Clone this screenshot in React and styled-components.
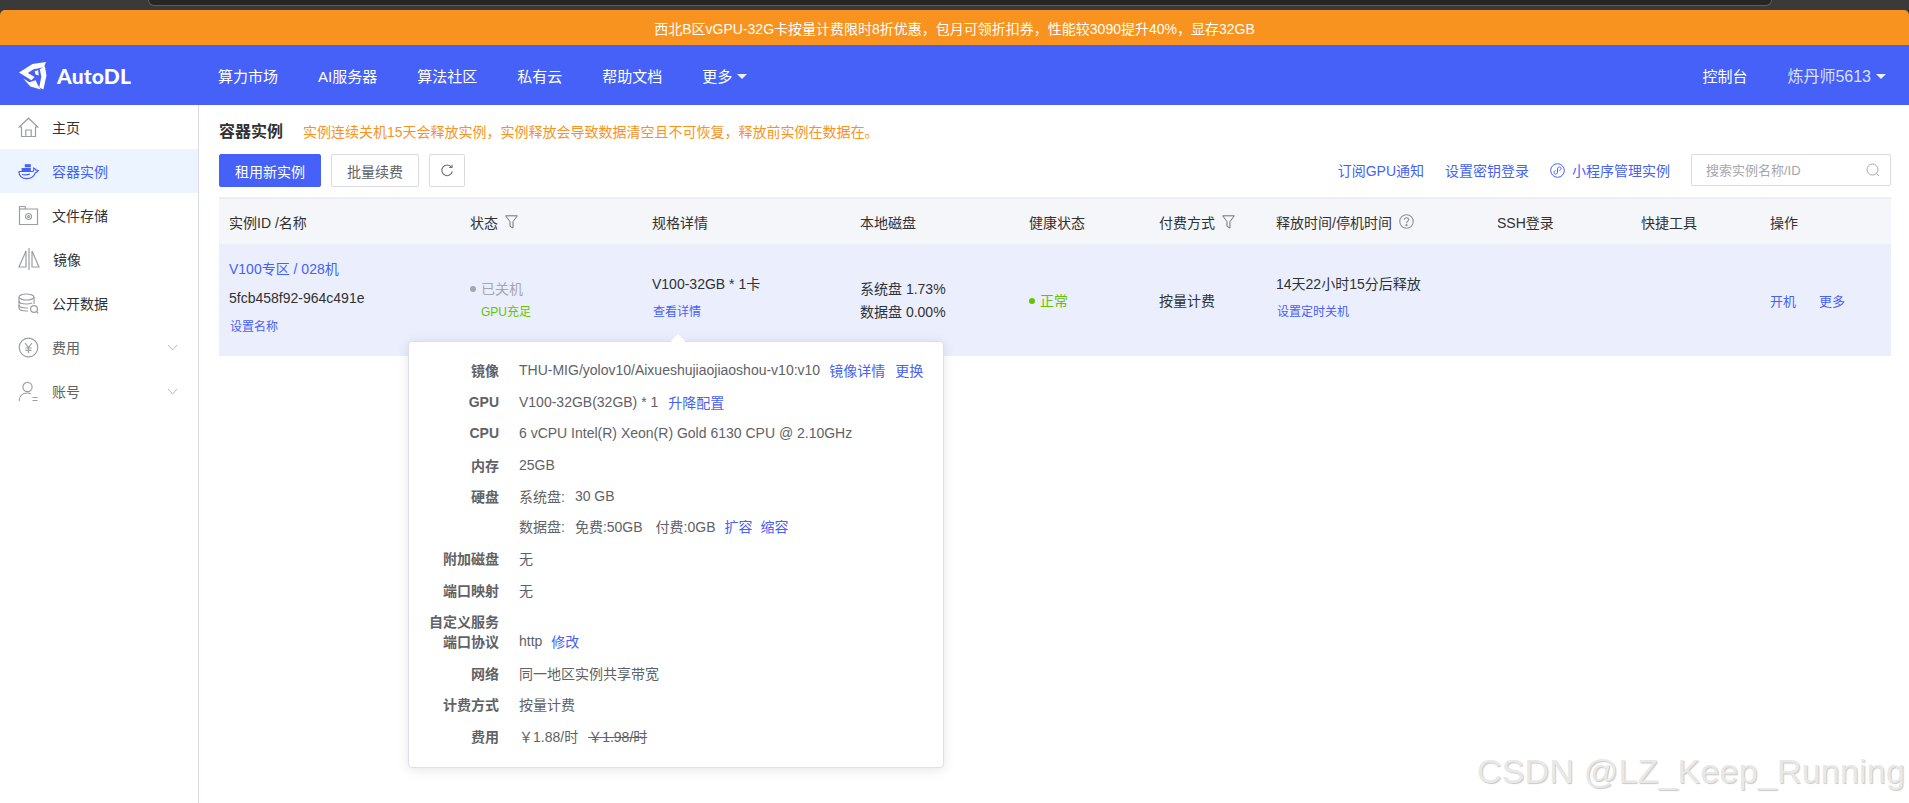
import React from 'react';
import styled, { createGlobalStyle } from 'styled-components';

const blue = '#4661f7';
const green = '#67c200';
const grey = '#a5a7ab';
const iconGrey = '#9b9ea4';

const GlobalStyle = createGlobalStyle`
  html, body {
    margin: 0;
    padding: 0;
    background: #fff;
  }
  body {
    font-family: "Liberation Sans", "Noto Sans CJK SC", sans-serif;
    font-size: 14px;
    color: #303133;
  }
  * {
    box-sizing: border-box;
  }
`;

const Page = styled.div`
  position: relative;
  width: 1909px;
  height: 803px;
  overflow: hidden;
  display: flex;
  flex-direction: column;
`;

const Chrome = styled.div`
  height: 10px;
  background: #3a3a3a;
`;

const ChromeTab = styled.div`
  height: 6px;
  margin: 0 137px 0 148px;
  background: #262626;
  border: 1px solid #5c5c5c;
  border-top: 0;
  border-radius: 0 0 6px 6px;
`;

const ChromeBack = styled.div`
  background: #3a3a3a;
`;

const Banner = styled.div`
  height: 35px;
  background: #f7931e;
  border-radius: 5px 5px 0 0;
  color: #fff;
  display: flex;
  align-items: center;
  justify-content: center;
  font-size: 14px;
`;

const Nav = styled.header`
  height: 60px;
  background: ${blue};
  display: flex;
  align-items: center;
  padding: 0 23px 0 18px;
  color: #fff;
`;

const Logo = styled.div`
  display: flex;
  align-items: center;
  gap: 10px;
  width: 200px;
  font-family: Lato, sans-serif;
  font-size: 21px;
  font-weight: 900;
  letter-spacing: 0.2px;
`;

const NavLinks = styled.nav`
  display: flex;
  align-items: center;
  gap: 40px;
  flex: 1;
  font-size: 15px;
`;

const NavRight = styled.div`
  display: flex;
  align-items: center;
  gap: 40px;
  font-size: 15px;
`;

const NavItem = styled.span`
  display: inline-flex;
  align-items: center;
  gap: 5px;
  font-size: ${props => (props.$dim ? 16 : 15)}px;
  color: ${props => (props.$dim ? 'rgba(255,255,255,0.82)' : '#fff')};
`;

const Caret = styled.i`
  display: inline-block;
  width: 0;
  height: 0;
  margin-top: 2px;
  border-left: 5px solid transparent;
  border-right: 5px solid transparent;
  border-top: 5px solid rgba(255, 255, 255, 0.9);
`;

const Body = styled.div`
  flex: 1;
  display: flex;
  min-height: 0;
`;

const Sidebar = styled.aside`
  width: 199px;
  flex: none;
  border-right: 1px solid #d8dbe6;
`;

const MenuItem = styled.div`
  height: 44px;
  display: flex;
  align-items: center;
  padding: 0 0 0 18px;
  gap: 13px;
  background: ${props => (props.$active ? '#ecf4ff' : 'transparent')};
  color: ${props => (props.$active ? blue : props.$muted ? '#5f6266' : '#303133')};
  svg {
    flex: none;
  }
`;

const MenuLabel = styled.span`
  width: 102px;
`;

const Main = styled.main`
  flex: 1;
  padding: 0 18px 0 20px;
  min-width: 0;
`;

const TitleRow = styled.div`
  height: 49px;
  display: flex;
  align-items: center;
  gap: 20px;
`;

const Title = styled.h1`
  margin: 0;
  font-size: 16px;
  font-weight: 700;
  color: #303133;
`;

const Hint = styled.span`
  margin-top: 3px;
  font-size: 14px;
  color: #f7931e;
`;

const Toolbar = styled.div`
  height: 33px;
  display: flex;
  align-items: center;
  gap: 10px;
`;

const Button = styled.button`
  height: 33px;
  width: ${props => props.$w}px;
  padding: 0;
  border: 1px solid ${props => (props.$primary ? blue : '#d8dbe6')};
  border-radius: 2px;
  background: ${props => (props.$primary ? blue : '#fff')};
  color: ${props => (props.$primary ? '#fff' : '#5f6266')};
  font: inherit;
  font-size: 14px;
  display: flex;
  align-items: center;
  justify-content: center;
`;

const ToolLinks = styled.div`
  margin-left: auto;
  display: flex;
  align-items: center;
  gap: 21px;
  margin-top: -1px;
  color: ${blue};
`;

const ToolLink = styled.span`
  display: inline-flex;
  align-items: center;
  gap: 7px;
`;

const SearchBox = styled.div`
  width: 200px;
  height: 32px;
  border: 1px solid #d8dbe6;
  border-radius: 2px;
  display: flex;
  align-items: center;
  padding: 0 10px 0 14px;
`;

const SearchInput = styled.input`
  flex: 1;
  min-width: 0;
  border: 0;
  outline: 0;
  padding: 0;
  font: inherit;
  font-size: 13px;
  &::placeholder {
    color: #a5a7ab;
    opacity: 1;
  }
`;

const Table = styled.div`
  position: relative;
  margin-top: 10px;
`;

const Cols = styled.div`
  display: grid;
  grid-template-columns: 241px 182px 208px 169px 130px 117px 221px 144px 129px 131px;
`;

const Head = styled(Cols)`
  height: 48px;
  background: #f5f6fa;
  border-top: 2px solid #eceef4;
  border-bottom: 1px solid #eceef4;
`;

const HeadCell = styled.div`
  padding-left: 10px;
  display: flex;
  align-items: center;
  gap: 7px;
  color: #303133;
`;

const Row = styled(Cols)`
  height: 111px;
  background: #ebeffd;
`;

const Cell = styled.div`
  padding: 0 0 ${props => props.$shift || 0}px 10px;
  display: flex;
  flex-direction: column;
  justify-content: center;
  align-items: flex-start;
  gap: ${props => props.$gap || 0}px;
`;

const Line = styled.div`
  height: 20px;
  line-height: 20px;
  white-space: nowrap;
  display: flex;
  align-items: center;
  color: ${props => props.$color || '#303133'};
  font-size: ${props => props.$size || 14}px;
`;

const SmallLink = styled(Line)`
  font-size: 12px;
  color: ${blue};
  margin-left: ${props => props.$indent || 0}px;
`;

const StatusNote = styled(Line)`
  font-size: 12px;
  color: ${green};
  margin-left: 11px;
`;

const Dot = styled.i`
  width: 6px;
  height: 6px;
  border-radius: 50%;
  margin-right: 5px;
  background: ${props => props.$color};
`;

const ActionLinks = styled.div`
  display: flex;
  gap: 23px;
  font-size: 13px;
  color: ${blue};
`;

const Popover = styled.div`
  position: absolute;
  top: 144px;
  left: 189px;
  width: 536px;
  height: 427px;
  padding-top: 18px;
  background: #fff;
  border: 1px solid #dcdfe8;
  border-radius: 4px;
  box-shadow: 0 2px 12px rgba(0, 0, 0, 0.1);
  color: #606266;
  &::before {
    content: '';
    position: absolute;
    top: -6px;
    left: 264px;
    width: 10px;
    height: 10px;
    background: #fff;
    transform: rotate(45deg);
  }
`;

const InfoRow = styled.div`
  height: 20px;
  margin-bottom: ${props => (props.$mb === undefined ? 11.6 : props.$mb)}px;
  display: flex;
  align-items: center;
  white-space: nowrap;
`;

const InfoLabel = styled.span`
  width: 90px;
  margin-right: 20px;
  text-align: right;
  font-weight: 700;
  color: #606266;
`;

const InfoValue = styled.span`
  font-size: 14px;
  margin-right: ${props => props.$mr || 0}px;
  text-decoration: ${props => (props.$strike ? 'line-through' : 'none')};
`;

const InfoLink = styled.span`
  color: ${blue};
  margin-right: ${props => props.$mr || 0}px;
`;

const Watermark = styled.div`
  position: absolute;
  right: 4px;
  bottom: 12px;
  font-family: "Liberation Sans", sans-serif;
  font-size: 34px;
  letter-spacing: 0.2px;
  color: #e8e8e8;
  text-shadow: 1px 1px 1px #c8c8c8;
`;

const LogoMark = () => (
  <svg width="29" height="29" viewBox="0 0 28 28" fill="#fff">
    <path d="M1 11 L14 3 L27 1 L25 6 L15 8 L9.5 11.5 L16 15.5 L13 18.5 Z" />
    <path d="M21 8 L26 5 L27.5 14 L24.5 27.5 L20.5 25.5 L22.5 15 Z" />
    <path d="M5 17 L11 20.5 L17 18.5 L19 23 L22 27.5 L12 24.5 Z" />
    <path d="M16 10 L19.5 9 L20 14 L17 13 Z" />
  </svg>
);

const stroke = { fill: 'none', stroke: 'currentColor', strokeWidth: 1.2 };

const HomeIcon = () => (
  <svg width="21" height="21" viewBox="0 0 21 21" color={iconGrey} {...stroke}>
    <path d="M1.2 10 L10.5 1.2 L19.8 10 H17.5 V19.5 H3.5 V10 Z" />
    <path d="M7.8 19.5 V13 H13.2 V19.5" />
  </svg>
);

const DockerIcon = () => (
  <svg width="21" height="21" viewBox="0 0 21 21" color={blue} {...stroke}>
    <path d="M1 10.5 H15 C15.8 9.5 16 8.4 15.6 7 C17 7.4 17.8 8.4 18 9.3 C18.8 9 19.6 9.2 20.3 9.6 C19.6 11.2 18.6 11.6 17.4 11.6 C16 15.6 12.8 17.6 8.6 17.6 C3.6 17.6 0.8 14.6 1 10.5 Z" />
    <path d="M4 13.5 C6.5 14 9.5 14 12 13" />
    <rect x="3.6" y="7" width="9.2" height="3.5" fill="currentColor" stroke="none" />
    <rect x="6.8" y="3.2" width="6" height="3.1" fill="currentColor" stroke="none" />
  </svg>
);

const FolderIcon = () => (
  <svg width="21" height="21" viewBox="0 0 21 21" color={iconGrey} {...stroke}>
    <path d="M1.5 19.5 V1.5 H7 L8 4 H19.5 V19.5 Z" />
    <path d="M1.5 4 H8" />
    <circle cx="10.5" cy="11.5" r="3" />
    <circle cx="10.5" cy="11.5" r="1" />
  </svg>
);

const MirrorIcon = () => (
  <svg width="22" height="24" viewBox="0 0 22 24" color={iconGrey} {...stroke}>
    <path d="M8 4 V20 H1 Z" />
    <path d="M14 4 V20 H21 Z" />
    <path d="M11 1 V23" />
  </svg>
);

const DatabaseIcon = () => (
  <svg width="21" height="21" viewBox="0 0 21 21" color={iconGrey} {...stroke}>
    <ellipse cx="8.5" cy="4" rx="7.5" ry="3" />
    <path d="M1 4 V15 C1 16.8 4.4 18 8.5 18 H10" />
    <path d="M16 4 V11" />
    <path d="M1 8 C1 9.8 4.4 11 8.5 11 C10.5 11 12.5 10.7 14 10" />
    <path d="M1 12 C1 13.8 4.4 15 8.5 15 H10" />
    <circle cx="16" cy="16" r="3.4" />
    <path d="M18.5 18.5 L20.3 20.3" />
  </svg>
);

const YenIcon = () => (
  <svg width="21" height="21" viewBox="0 0 21 21" color={iconGrey} {...stroke}>
    <circle cx="10.5" cy="10.5" r="9.3" />
    <path d="M7 6 L10.5 10.5 L14 6 M10.5 10.5 V16 M7.4 11 H13.6 M7.4 13.4 H13.6" />
  </svg>
);

const UserIcon = () => (
  <svg width="21" height="21" viewBox="0 0 21 21" color={iconGrey} {...stroke}>
    <circle cx="9.5" cy="6" r="4.6" />
    <path d="M1.2 20 C1.2 15 4.5 12 9.5 12 C10.8 12 12 12.2 13 12.7" />
    <path d="M14.5 16.5 H19.5 M14.5 19.5 H19.5" />
  </svg>
);

const Chevron = () => (
  <svg width="11" height="7" viewBox="0 0 11 7" color="#b4b7bd" fill="none" stroke="currentColor" strokeWidth="1">
    <path d="M1 1 L5.5 6 L10 1" />
  </svg>
);

const RefreshIcon = () => (
  <svg width="14" height="14" viewBox="0 0 14 14" color="#6b6e74" fill="none" stroke="currentColor" strokeWidth="1.1">
    <path d="M11.5 3.4 A5.3 5.3 0 1 0 12.3 7.4" />
    <path d="M9.2 3.5 H12 V0.8" />
  </svg>
);

const FunnelIcon = () => (
  <svg width="13" height="14" viewBox="0 0 13 14" color="#6f7277" fill="none" stroke="currentColor" strokeWidth="1">
    <path d="M0.7 0.8 H12.3 L8 6.6 V13 L5 11.4 V6.6 Z" />
  </svg>
);

const HelpIcon = () => (
  <svg width="15" height="15" viewBox="0 0 14 14" color="#8f9297" fill="none" stroke="currentColor" strokeWidth="1">
    <circle cx="7" cy="7" r="6.3" />
    <path d="M5 5.4 C5 2.9 9 2.9 9 5.3 C9 6.8 7 6.8 7 8.6" />
    <circle cx="7" cy="10.4" r="0.5" fill="currentColor" />
  </svg>
);

const MiniAppIcon = () => (
  <svg width="15" height="15" viewBox="0 0 15 15" color={blue} fill="none" stroke="currentColor" strokeWidth="1">
    <circle cx="7.5" cy="7.5" r="6.8" />
    <path d="M4 9.5 C4 12 7.5 11.5 7.5 9 V6 C7.5 3.5 11 3 11 5.5 C11 6.8 10 7.3 9.2 7.4" />
    <path d="M5.8 7.6 C5 7.7 4 8.3 4 9.5" />
  </svg>
);

const SearchIcon = () => (
  <svg width="14" height="14" viewBox="0 0 14 14" color="#a5a7ab" fill="none" stroke="currentColor" strokeWidth="1">
    <circle cx="6.5" cy="6.5" r="5.5" />
    <path d="M10.5 10.5 L13 13" />
  </svg>
);

const menu = [
  { label: '主页', icon: HomeIcon },
  { label: '容器实例', icon: DockerIcon, active: true },
  { label: '文件存储', icon: FolderIcon },
  { label: '镜像', icon: MirrorIcon },
  { label: '公开数据', icon: DatabaseIcon },
  { label: '费用', icon: YenIcon, muted: true, more: true },
  { label: '账号', icon: UserIcon, muted: true, more: true }
];

const headers = [
  { label: '实例ID /名称' },
  { label: '状态', icon: FunnelIcon },
  { label: '规格详情' },
  { label: '本地磁盘' },
  { label: '健康状态' },
  { label: '付费方式', icon: FunnelIcon },
  { label: '释放时间/停机时间', icon: HelpIcon },
  { label: 'SSH登录' },
  { label: '快捷工具' },
  { label: '操作' }
];

const App = () => {
  return (
    <Page>
      <GlobalStyle />
      <Chrome>
        <ChromeTab />
      </Chrome>
      <ChromeBack>
        <Banner>西北B区vGPU-32G卡按量计费限时8折优惠，包月可领折扣券，性能较3090提升40%，显存32GB</Banner>
      </ChromeBack>
      <Nav>
        <Logo>
          <LogoMark />
          AutoDL
        </Logo>
        <NavLinks>
          <NavItem>算力市场</NavItem>
          <NavItem>AI服务器</NavItem>
          <NavItem>算法社区</NavItem>
          <NavItem>私有云</NavItem>
          <NavItem>帮助文档</NavItem>
          <NavItem>更多<Caret /></NavItem>
        </NavLinks>
        <NavRight>
          <NavItem>控制台</NavItem>
          <NavItem $dim>炼丹师5613<Caret /></NavItem>
        </NavRight>
      </Nav>
      <Body>
        <Sidebar>
          {menu.map(item => {
            const Icon = item.icon;
            return (
              <MenuItem key={item.label} $active={item.active} $muted={item.muted}>
                <Icon />
                <MenuLabel>{item.label}</MenuLabel>
                {item.more && <Chevron />}
              </MenuItem>
            );
          })}
        </Sidebar>
        <Main>
          <TitleRow>
            <Title>容器实例</Title>
            <Hint>实例连续关机15天会释放实例，实例释放会导致数据清空且不可恢复，释放前实例在数据在。</Hint>
          </TitleRow>
          <Toolbar>
            <Button $primary $w={102}>租用新实例</Button>
            <Button $w={88}>批量续费</Button>
            <Button $w={36}><RefreshIcon /></Button>
            <ToolLinks>
              <ToolLink>订阅GPU通知</ToolLink>
              <ToolLink>设置密钥登录</ToolLink>
              <ToolLink><MiniAppIcon />小程序管理实例</ToolLink>
              <SearchBox>
                <SearchInput placeholder="搜索实例名称/ID" />
                <SearchIcon />
              </SearchBox>
            </ToolLinks>
          </Toolbar>
          <Table>
            <Head>
              {headers.map(h => {
                const Icon = h.icon;
                return (
                  <HeadCell key={h.label}>
                    {h.label}
                    {Icon && <Icon />}
                  </HeadCell>
                );
              })}
            </Head>
            <Row>
              <Cell $gap={9} $shift={5}>
                <Line $color={blue}>V100专区 / 028机</Line>
                <Line>5fcb458f92-964c491e</Line>
                <SmallLink $indent={1}>设置名称</SmallLink>
              </Cell>
              <Cell $gap={3}>
                <Line $color={grey}><Dot $color={grey} />已关机</Line>
                <StatusNote>GPU充足</StatusNote>
              </Cell>
              <Cell $gap={8} $shift={5}>
                <Line>V100-32GB * 1卡</Line>
                <SmallLink $indent={1}>查看详情</SmallLink>
              </Cell>
              <Cell $gap={3}>
                <Line>系统盘 1.73%</Line>
                <Line>数据盘 0.00%</Line>
              </Cell>
              <Cell>
                <Line $color={green}><Dot $color={green} />正常</Line>
              </Cell>
              <Cell>
                <Line>按量计费</Line>
              </Cell>
              <Cell $gap={8} $shift={5}>
                <Line>14天22小时15分后释放</Line>
                <SmallLink $indent={1}>设置定时关机</SmallLink>
              </Cell>
              <Cell />
              <Cell />
              <Cell>
                <ActionLinks>
                  <span>开机</span>
                  <span>更多</span>
                </ActionLinks>
              </Cell>
            </Row>
            <Popover>
              <InfoRow>
                <InfoLabel>镜像</InfoLabel>
                <InfoValue $mr={9}>THU-MIG/yolov10/Aixueshujiaojiaoshou-v10:v10</InfoValue>
                <InfoLink $mr={10}>镜像详情</InfoLink>
                <InfoLink>更换</InfoLink>
              </InfoRow>
              <InfoRow>
                <InfoLabel>GPU</InfoLabel>
                <InfoValue $mr={10}>V100-32GB(32GB) * 1</InfoValue>
                <InfoLink>升降配置</InfoLink>
              </InfoRow>
              <InfoRow>
                <InfoLabel>CPU</InfoLabel>
                <InfoValue>6 vCPU Intel(R) Xeon(R) Gold 6130 CPU @ 2.10GHz</InfoValue>
              </InfoRow>
              <InfoRow>
                <InfoLabel>内存</InfoLabel>
                <InfoValue>25GB</InfoValue>
              </InfoRow>
              <InfoRow $mb={10}>
                <InfoLabel>硬盘</InfoLabel>
                <InfoValue $mr={10}>系统盘:</InfoValue>
                <InfoValue>30 GB</InfoValue>
              </InfoRow>
              <InfoRow>
                <InfoLabel />
                <InfoValue $mr={10}>数据盘:</InfoValue>
                <InfoValue $mr={13}>免费:50GB</InfoValue>
                <InfoValue $mr={9}>付费:0GB</InfoValue>
                <InfoLink $mr={8}>扩容</InfoLink>
                <InfoLink>缩容</InfoLink>
              </InfoRow>
              <InfoRow>
                <InfoLabel>附加磁盘</InfoLabel>
                <InfoValue>无</InfoValue>
              </InfoRow>
              <InfoRow>
                <InfoLabel>端口映射</InfoLabel>
                <InfoValue>无</InfoValue>
              </InfoRow>
              <InfoRow $mb={0}>
                <InfoLabel>自定义服务</InfoLabel>
              </InfoRow>
              <InfoRow>
                <InfoLabel>端口协议</InfoLabel>
                <InfoValue $mr={9}>http</InfoValue>
                <InfoLink>修改</InfoLink>
              </InfoRow>
              <InfoRow>
                <InfoLabel>网络</InfoLabel>
                <InfoValue>同一地区实例共享带宽</InfoValue>
              </InfoRow>
              <InfoRow>
                <InfoLabel>计费方式</InfoLabel>
                <InfoValue>按量计费</InfoValue>
              </InfoRow>
              <InfoRow>
                <InfoLabel>费用</InfoLabel>
                <InfoValue $mr={10}>￥1.88/时</InfoValue>
                <InfoValue $strike>￥1.98/时</InfoValue>
              </InfoRow>
            </Popover>
          </Table>
        </Main>
      </Body>
      <Watermark>CSDN @LZ_Keep_Running</Watermark>
    </Page>
  );
};

export default App;
